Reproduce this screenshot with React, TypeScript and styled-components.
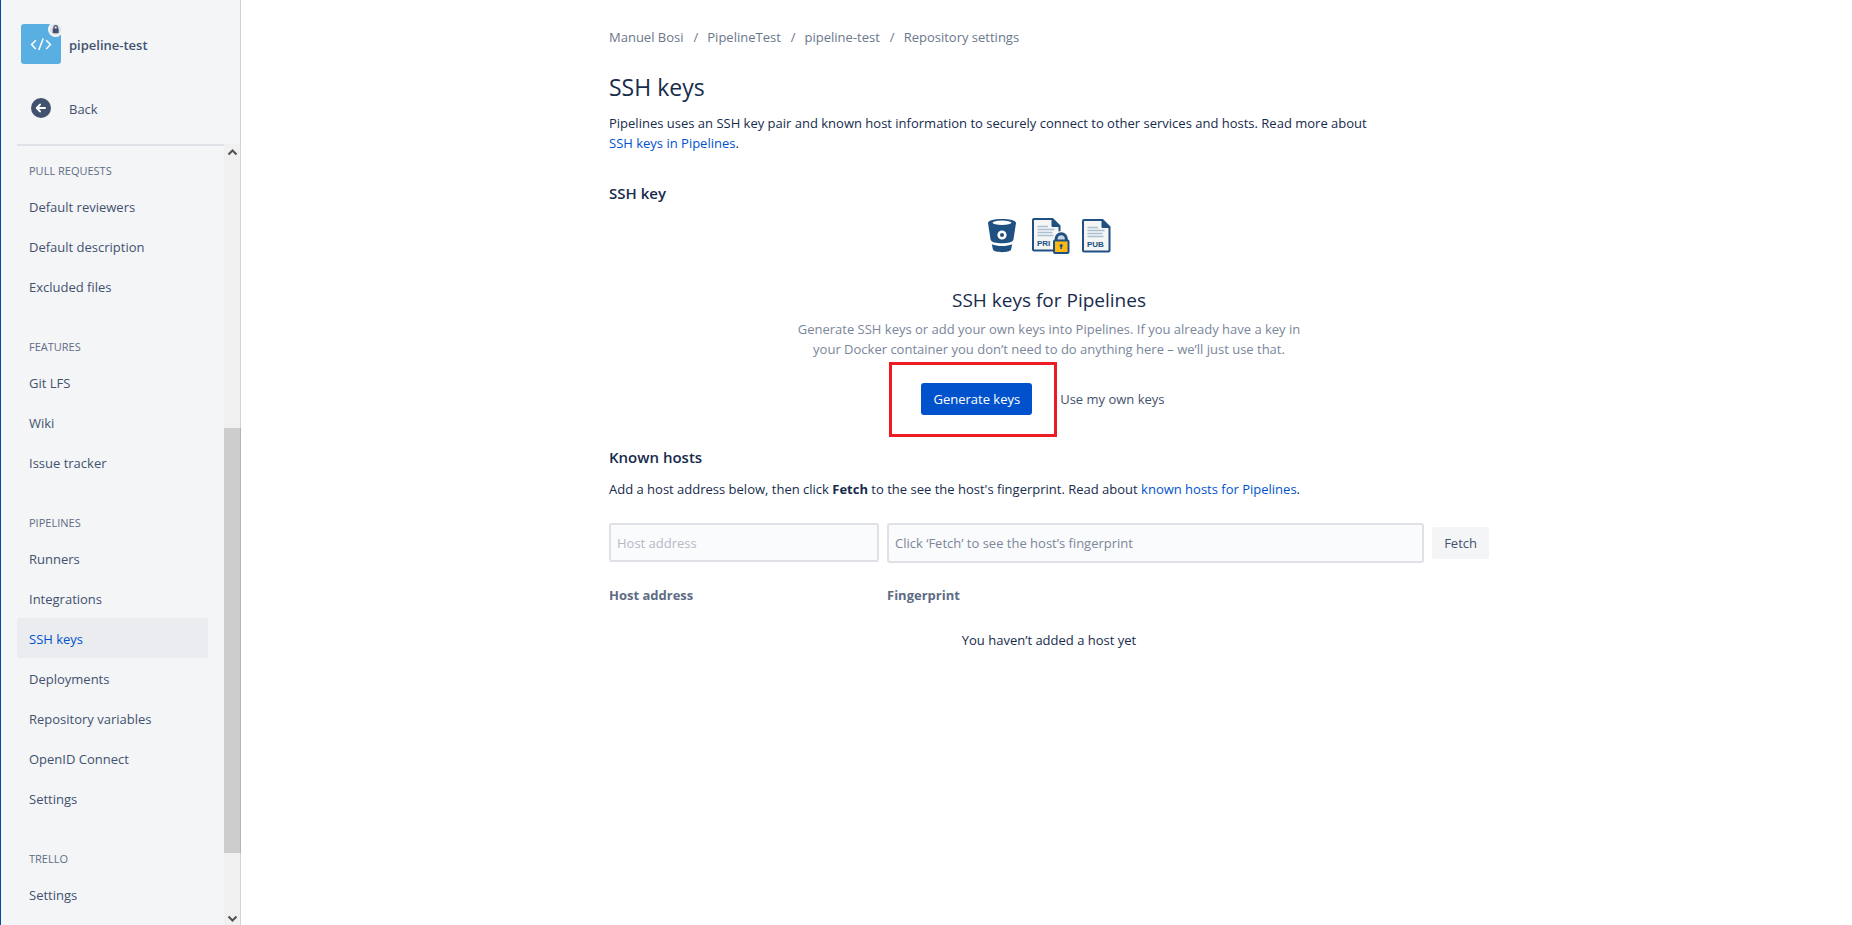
import React from "react";
import styled, { createGlobalStyle } from "styled-components";

const GlobalStyle = createGlobalStyle`
  *, *::before, *::after { box-sizing: border-box; }
  body { margin: 0; background: #fff; }
  body, button, input { font-family: "Open Sans", "Noto Sans", sans-serif; font-size: 13px; line-height: 20px; }
  h1, h2, h3, p, ul, ol { margin: 0; padding: 0; }
  ul, ol { list-style: none; }
`;

const Page = styled.div`
  display: flex;
  height: 100vh;
  color: #172b4d;
`;

const Sidebar = styled.nav`
  display: flex;
  flex-direction: column;
  flex: 0 0 241px;
  background: #f4f5f7;
  border-left: 1px solid #0747a6;
  box-shadow: inset -1px 0 0 #d0d1d4;
  color: #42526e;
`;

const RepoLink = styled.a`
  display: flex;
  align-items: center;
  gap: 8px;
  padding: 24px 20px 0;
  color: #42526e;
  font-weight: 600;
  text-decoration: none;
`;

const RepoAvatar = styled.span`
  position: relative;
  display: flex;
  width: 40px;
  height: 40px;
  border-radius: 3px;
  background: #59afe1;
`;

const PrivateBadge = styled.svg`
  position: absolute;
  top: -2px;
  right: -2px;
`;

const HeaderLabel = styled.span`
  padding-top: 2px;
`;

const BackLink = styled.a`
  display: flex;
  align-items: center;
  gap: 18px;
  height: 40px;
  margin: 24px 16px 0;
  padding: 0 14px;
  color: #42526e;
  text-decoration: none;
`;

const NavBody = styled.div`
  display: flex;
  flex: 1;
  min-height: 0;
  margin-top: 16px;
`;

const NavScroll = styled.div`
  flex: 1;
  overflow: hidden;
  margin-left: 16px;
  padding-top: 17px;
  border-top: 2px solid #dfe1e9;
`;

const NavGroup = styled.section`
  padding: 0 16px 33px 0;
`;

const NavHeading = styled.h3`
  margin-bottom: 7px;
  padding-left: 12px;
  font-size: 11px;
  line-height: 16px;
  font-weight: 400;
  color: #5e6c84;
  text-transform: uppercase;
`;

const NavItem = styled.a<{ $active?: boolean }>`
  display: block;
  padding: 11px 12px 9px;
  border-radius: 3px;
  text-decoration: none;
  color: ${(p) => (p.$active ? "#0052cc" : "#42526e")};
  background: ${(p) => (p.$active ? "#ebecf0" : "transparent")};
`;

const ScrollBar = styled.div`
  display: flex;
  flex-direction: column;
  width: 17px;
  background: #f0f0f0;
  box-shadow: inset -1px 0 0 #d4d4d4;
`;

const ScrollArrow = styled.svg`
  display: block;
  flex: none;
`;

const ScrollSpace = styled.div<{ $share: number }>`
  flex: ${(p) => p.$share} 0 0;
`;

const ScrollThumb = styled(ScrollSpace)`
  background: #cdcdcd;
  box-shadow: inset -1px 0 0 #b4b4b4;
`;

const Main = styled.main`
  flex: 1;
  min-width: 0;
  padding: 27px 0 32px 5px;
`;

const Content = styled.div`
  max-width: 880px;
  margin: 0 auto;
`;

const Crumbs = styled.ol`
  display: flex;
  color: #6b778c;

  li + li::before {
    content: "/";
    padding: 0 9px 0 10px;
  }

  a {
    color: inherit;
    text-decoration: none;
  }
`;

const Title = styled.h1`
  margin-top: 26px;
  font-size: 23px;
  line-height: 28px;
  font-weight: 400;
`;

const Intro = styled.p`
  max-width: 780px;
  margin-top: 12px;
`;

const Link = styled.a`
  color: #0052cc;
  text-decoration: none;
`;

const SectionTitle = styled.h2`
  font-size: 15px;
  line-height: 20px;
  font-weight: 600;
`;

const KeySection = styled.section`
  margin-top: 30px;
`;

const EmptyState = styled.div`
  display: flex;
  flex-direction: column;
  align-items: center;
  text-align: center;
`;

const KeyArt = styled.svg`
  display: block;
  margin-top: 15px;
`;

const EmptyTitle = styled.h3`
  margin-top: 32px;
  font-size: 19px;
  line-height: 24px;
  font-weight: 400;
`;

const EmptyText = styled.p`
  max-width: 520px;
  margin-top: 7px;
  color: #7a869a;
`;

const Actions = styled.div`
  display: flex;
  gap: 16px;
  margin-top: 24px;
`;

const Highlight = styled.span`
  position: relative;

  &::after {
    content: "";
    position: absolute;
    inset: -21px -25px -22px -32px;
    border: 3px solid #ed1c24;
    pointer-events: none;
  }
`;

const Button = styled.button<{ $kind?: "primary" | "link" }>`
  display: block;
  height: 32px;
  padding: 0 12px;
  border: 0;
  border-radius: 3px;
  white-space: nowrap;
  color: ${(p) => (p.$kind === "primary" ? "#fff" : "#42526e")};
  background: ${(p) =>
    p.$kind === "primary" ? "#0052cc" : p.$kind === "link" ? "none" : "#f4f5f7"};
`;

const HostsSection = styled.section`
  margin-top: 32px;
`;

const HostsText = styled.p`
  margin-top: 12px;
`;

const HostForm = styled.form`
  display: grid;
  grid-template-columns: 270px 1fr auto;
  column-gap: 8px;
  align-items: start;
  margin-top: 24px;

  button {
    margin-top: 4px;
  }
`;

const Field = styled.input`
  width: 100%;
  height: 39px;
  padding: 0 6px;
  border: 2px solid #dfe1e6;
  border-radius: 3px;
  background: #fafbfc;
  color: #172b4d;

  &::placeholder {
    color: #b3bac5;
    opacity: 1;
  }

  &:read-only {
    height: 40px;
  }

  &:read-only::placeholder {
    color: #7a869a;
  }
`;

const HostTable = styled.table`
  width: 100%;
  margin-top: 22px;
  border-collapse: collapse;

  th {
    padding: 0;
    text-align: left;
    font-weight: 700;
    color: #5e6c84;
  }

  th:first-child {
    width: 278px;
  }

  td {
    padding: 25px 0 0;
    text-align: center;
  }
`;

const groups = [
  { title: "Pull requests", items: ["Default reviewers", "Default description", "Excluded files"] },
  { title: "Features", items: ["Git LFS", "Wiki", "Issue tracker"] },
  {
    title: "Pipelines",
    items: [
      "Runners",
      "Integrations",
      "SSH keys",
      "Deployments",
      "Repository variables",
      "OpenID Connect",
      "Settings",
    ],
  },
  { title: "Trello", items: ["Settings"] },
];

const crumbs = ["Manuel Bosi", "PipelineTest", "pipeline-test", "Repository settings"];

function CodeAvatar() {
  return (
    <RepoAvatar>
      <svg width="40" height="40" viewBox="0 0 40 40" fill="none" stroke="#fff" strokeWidth="1.5">
        <path d="M14.8 16.2 10.6 20.6l4.2 4.4M25.2 16.2l4.2 4.4-4.2 4.4M22.2 14.5l-4.4 11.6" />
      </svg>
      <PrivateBadge width="15" height="15" viewBox="0 0 15 15">
        <circle cx="7.5" cy="7.5" r="7.5" fill="#f4f5f7" />
        <circle cx="7.5" cy="7.5" r="5.5" fill="#dfe1e6" />
        <path d="M6 7V5.400a1.700 1.700 0 0 1 3.400 0V7" fill="none" stroke="#42526e" strokeWidth="1.300" />
        <rect x="4.700" y="6.400" width="6" height="4.800" rx=".8" fill="#42526e" />
      </PrivateBadge>
    </RepoAvatar>
  );
}

function BackIcon() {
  return (
    <svg width="20" height="20" viewBox="0 0 20 20" fill="none">
      <circle cx="10" cy="10" r="10" fill="#42526e" />
      <path
        d="M14 10H6.200M9 6.600 5.800 10l3.200 3.400"
        stroke="#fff"
        strokeWidth="2"
        strokeLinecap="round"
        strokeLinejoin="round"
      />
    </svg>
  );
}

function KeyFile({ x, y, label }: { x: number; y: number; label: string }) {
  return (
    <g transform={`translate(${x} ${y})`}>
      <path
        d="M2 1h18.500l7 7v23.500a1 1 0 0 1-1 1H2a1 1 0 0 1-1-1V2a1 1 0 0 1 1-1z"
        fill="#f5f5f5"
        stroke="#205081"
        strokeWidth="2"
      />
      <path d="M20 1v7.500h7.500z" fill="#205081" stroke="#205081" strokeLinejoin="round" />
      <path
        d="M5.500 8.500H16M5.500 11.500h17M5.500 14.500h15M5.500 17.500h16"
        stroke="#a9bfd2"
        strokeWidth="1.300"
      />
      <text
        x="5"
        y="28"
        fill="#205081"
        fontFamily="Liberation Sans, sans-serif"
        fontSize="8"
        fontWeight="700"
      >
        {label}
      </text>
    </g>
  );
}

function KeyIllustration() {
  return (
    <KeyArt width="124" height="38" viewBox="0 0 124 38" aria-hidden="true">
      <path d="M1 5C1-.3 29-.3 29 5l-2.600 16.800C25.500 26.500 4.500 26.500 3.600 21.800z" fill="#205081" />
      <ellipse cx="15" cy="4.800" rx="9.500" ry="2.200" fill="#fff" />
      <circle cx="15" cy="17" r="3.300" fill="#205081" stroke="#fff" strokeWidth="2.600" />
      <path
        d="M4.800 26.200c5.500 2.400 14.900 2.400 20.400 0l-1.200 5.600c-1.500 3.200-16.500 3.200-18 0z"
        fill="#205081"
      />
      <KeyFile x={45} y={0} label="PRI" />
      <KeyFile x={95} y={1} label="PUB" />
      <path
        d="M69.500 23v-2.200a4.700 4.700 0 0 1 9.400 0V23"
        fill="none"
        stroke="#f5f5f5"
        strokeWidth="6"
      />
      <path
        d="M69.100 23v-2.200a5.100 5.100 0 0 1 10.200 0V23"
        fill="#c9d6e2"
        stroke="#205081"
        strokeWidth="3"
      />
      <rect x="67" y="22.500" width="14.500" height="12.500" rx="1" fill="#fdb813" stroke="#205081" strokeWidth="2" />
      <circle cx="74.200" cy="27.500" r="1.600" fill="#205081" />
      <path d="M74.200 27.500V31" stroke="#205081" strokeWidth="1.500" />
    </KeyArt>
  );
}

export default function App() {
  return (
    <>
      <GlobalStyle />
      <Page>
        <Sidebar aria-label="Repository settings">
          <RepoLink href="#">
            <CodeAvatar />
            <HeaderLabel>pipeline-test</HeaderLabel>
          </RepoLink>
          <BackLink href="#">
            <BackIcon />
            <HeaderLabel>Back</HeaderLabel>
          </BackLink>
          <NavBody>
            <NavScroll>
              {groups.map((g) => (
                <NavGroup key={g.title}>
                  <NavHeading>{g.title}</NavHeading>
                  <ul>
                    {g.items.map((item) => (
                      <li key={item}>
                        <NavItem href="#" $active={item === "SSH keys"}>
                          {item}
                        </NavItem>
                      </li>
                    ))}
                  </ul>
                </NavGroup>
              ))}
            </NavScroll>
            <ScrollBar>
              <ScrollArrow width="17" height="17" viewBox="0 0 17 17" fill="none" stroke="#505050" strokeWidth="2">
                <path d="M4.500 10.500l4-4 4 4" />
              </ScrollArrow>
              <ScrollSpace $share={267} />
              <ScrollThumb $share={425} />
              <ScrollSpace $share={55} />
              <ScrollArrow width="17" height="17" viewBox="0 0 17 17" fill="none" stroke="#505050" strokeWidth="2">
                <path d="M4.500 8.500l4 4 4-4" />
              </ScrollArrow>
            </ScrollBar>
          </NavBody>
        </Sidebar>
        <Main>
          <Content>
            <Crumbs>
              {crumbs.map((c) => (
                <li key={c}>
                  <a href="#">{c}</a>
                </li>
              ))}
            </Crumbs>
            <Title>SSH keys</Title>
            <Intro>
              Pipelines uses an SSH key pair and known host information to securely connect to other
              services and hosts. Read more about <Link href="#">SSH keys in Pipelines</Link>.
            </Intro>
            <KeySection>
              <SectionTitle>SSH key</SectionTitle>
              <EmptyState>
                <KeyIllustration />
                <EmptyTitle>SSH keys for Pipelines</EmptyTitle>
                <EmptyText>
                  Generate SSH keys or add your own keys into Pipelines. If you already have a key in
                  your Docker container you don’t need to do anything here – we’ll just use that.
                </EmptyText>
                <Actions>
                  <Highlight>
                    <Button type="button" $kind="primary">
                      Generate keys
                    </Button>
                  </Highlight>
                  <Button type="button" $kind="link">
                    Use my own keys
                  </Button>
                </Actions>
              </EmptyState>
            </KeySection>
            <HostsSection>
              <SectionTitle>Known hosts</SectionTitle>
              <HostsText>
                Add a host address below, then click <strong>Fetch</strong> to the see the host's
                fingerprint. Read about <Link href="#">known hosts for Pipelines</Link>.
              </HostsText>
              <HostForm onSubmit={(e) => e.preventDefault()}>
                <Field aria-label="Host address" placeholder="Host address" />
                <Field
                  aria-label="Fingerprint"
                  placeholder="Click ‘Fetch’ to see the host’s fingerprint"
                  readOnly
                />
                <Button type="submit">Fetch</Button>
              </HostForm>
              <HostTable>
                <thead>
                  <tr>
                    <th scope="col">Host address</th>
                    <th scope="col">Fingerprint</th>
                  </tr>
                </thead>
                <tbody>
                  <tr>
                    <td colSpan={2}>You haven’t added a host yet</td>
                  </tr>
                </tbody>
              </HostTable>
            </HostsSection>
          </Content>
        </Main>
      </Page>
    </>
  );
}
